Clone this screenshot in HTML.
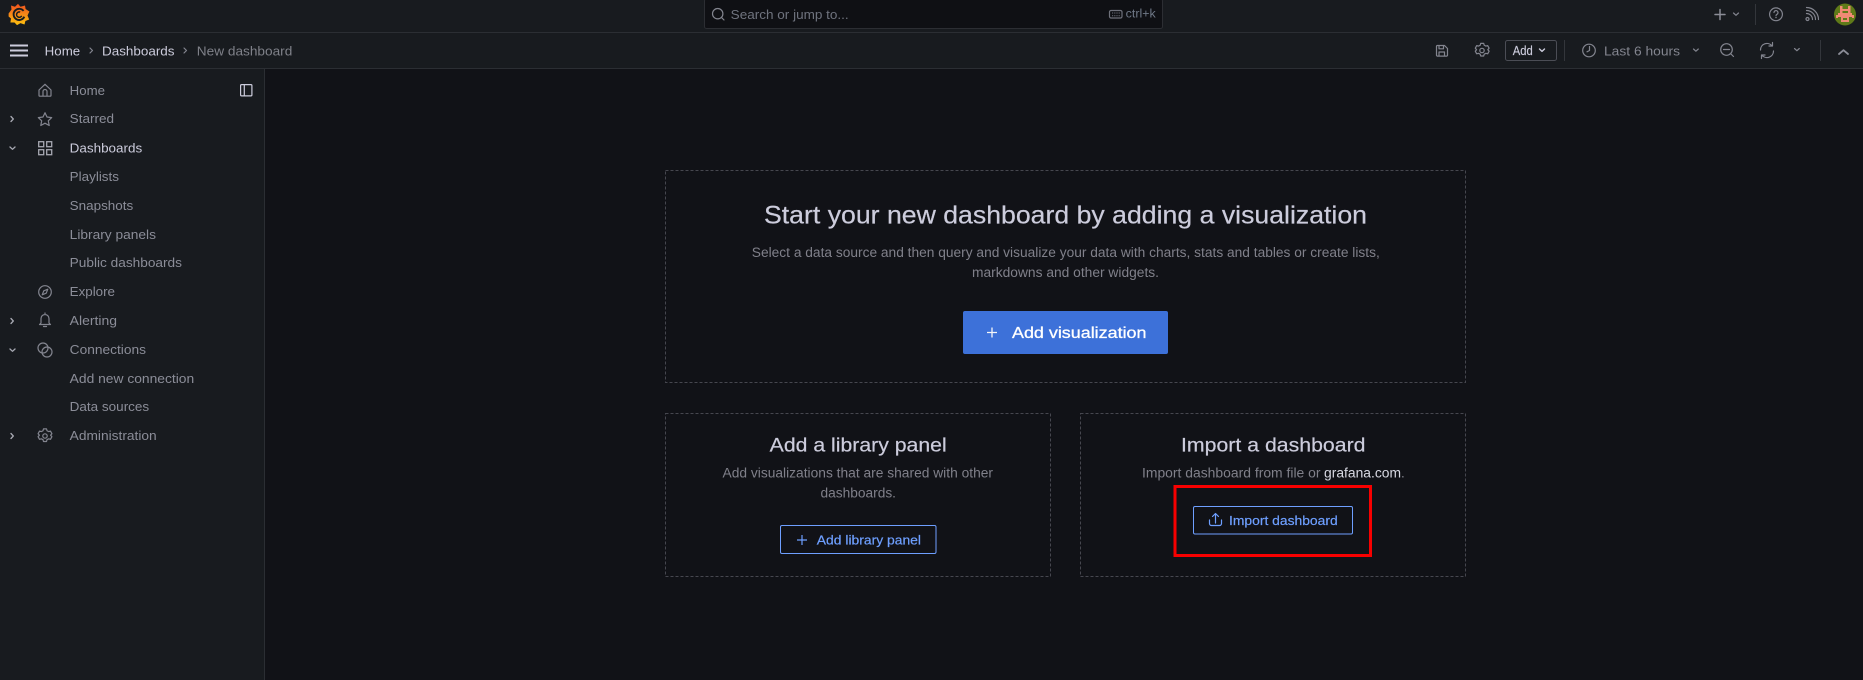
<!DOCTYPE html>
<html lang="en">
<head>
<meta charset="utf-8">
<title>New dashboard - Grafana</title>
<style>
html,body{margin:0;padding:0;background:#111217;width:1863px;height:680px;overflow:hidden}
svg{display:block}
text{font-family:"Liberation Sans",sans-serif;white-space:pre}
.nav{font-size:13.2px;fill:#8b8d98}
.bc{font-size:13.2px;fill:#ccccdc}
.d{font-size:13.5px;fill:#80808a}
.t{fill:#ccccdc;stroke:#ccccdc;stroke-width:.2px}
.b{font-size:13px;fill:#6e9fff;stroke:#6e9fff;stroke-width:.2px}
.i{fill:none;stroke:#83858f;stroke-width:1.2;stroke-linecap:round;stroke-linejoin:round}
</style>
</head>
<body>
<svg width="1863" height="680" viewBox="0 0 1863 680" xmlns="http://www.w3.org/2000/svg">
<defs>
<linearGradient id="g" x1="0" y1="1" x2="0" y2="0"><stop offset="0" stop-color="#fcc20f"/><stop offset="1" stop-color="#f0501f"/></linearGradient>
</defs>
<rect width="1863" height="680" fill="#111217"/>
<!-- header rows -->
<rect width="1863" height="68" fill="#181b1f"/>
<rect y="32" width="1863" height="1" fill="#2b2e33"/>
<rect y="68" width="1863" height="1" fill="#2b2e33"/>
<!-- sidebar -->
<rect y="69" width="264" height="611" fill="#181b1f"/>
<rect x="264" y="69" width="1" height="611" fill="#2b2e33"/>

<!-- logo -->
<g transform="translate(19 14.5)">
<g fill="url(#g)">
<polygon points="-10.4,-1 -7.5,-5 -8,-9 -4,-7.8 -1,-10.6 1.5,-7.8 6,-9 6.6,-5.5 10.4,-3 8.5,1 10.2,5 6.4,6.5 5.5,10 1.5,8.6 -2,10.6 -4.5,8 -8.6,8 -8,4 -10.4,2"/>
</g>
<path d="M5.3 2.2A5.6 5.6 0 1 1 4.6-3.6" fill="none" stroke="#181b1f" stroke-width="1.9"/>
<path d="M2.7 1.3A2.7 2.7 0 1 1 1.2-2.4" fill="none" stroke="#181b1f" stroke-width="1.5"/>
</g>

<!-- search -->
<rect x="704.5" y="-1" width="458" height="29.5" rx="2" fill="#0f1014" stroke="#2c2e33"/>
<circle cx="717.7" cy="13.7" r="5.2" fill="none" stroke="#83858f" stroke-width="1.2"/>
<path d="M721.5 17.5l2.5 2.5" class="i"/>
<text x="730.7" y="19" font-size="13.2" fill="#6f737e" textLength="118" lengthAdjust="spacingAndGlyphs">Search or jump to...</text>
<rect x="1109.5" y="10.5" width="12.5" height="7.5" rx="1.5" fill="none" stroke="#6f717b" stroke-width="1.2"/>
<path d="M1112 13h8M1112 15.7h8" stroke="#6f717b" stroke-width="1" stroke-dasharray="1 .8"/>
<text x="1125.7" y="17.5" font-size="11.5" fill="#6f7887" textLength="30" lengthAdjust="spacingAndGlyphs">ctrl+k</text>

<!-- top right -->
<path d="M1720 9.5v10M1715 14.5h10" stroke="#8b8d97" stroke-width="1.5" stroke-linecap="round"/>
<path d="M1733.5 13l2.5 2.3 2.5-2.3" class="i"/>
<rect x="1755" y="4" width="1" height="21" fill="#33363b"/>
<circle cx="1776" cy="14.3" r="6.4" class="i"/>
<path d="M1774 12.5a2 2 0 1 1 3 1.8c-.7.4-1 .8-1 1.4" class="i" stroke-width="1.1"/>
<circle cx="1776" cy="17.6" r=".7" fill="#83858f"/>
<circle cx="1807.5" cy="19" r="1.5" class="i"/>
<path d="M1806.5 14a6 6 0 0 1 6 6M1806.5 11a9 9 0 0 1 9 9M1806.5 8a12 12 0 0 1 12 12" class="i" stroke-width="1.1" transform="translate(0 -.5)"/>
<!-- avatar -->
<circle cx="1845" cy="14.5" r="11" fill="#5f7a18"/>
<g fill="#f08a75">
<rect x="1840" y="6" width="2.5" height="7"/><rect x="1848" y="6" width="2.5" height="7"/>
<rect x="1842" y="9" width="6" height="2"/>
<rect x="1838" y="13" width="14" height="4"/>
<rect x="1841" y="17" width="8" height="5"/>
<rect x="1836" y="15" width="2" height="3"/><rect x="1852" y="15" width="2" height="3"/>
</g>
<rect x="1843" y="18" width="4" height="2" fill="#5f7a18"/>

<!-- breadcrumb row -->
<path d="M10 45.5h18M10 50.5h18M10 55.5h18" stroke="#ccccdc" stroke-width="1.9"/>
<text class="bc" x="44.7" y="55.3" textLength="35.5" lengthAdjust="spacingAndGlyphs">Home</text>
<path d="M90 48l2.5 2.5-2.5 2.5" class="i"/>
<text class="bc" x="102" y="55.3" textLength="72.5" lengthAdjust="spacingAndGlyphs">Dashboards</text>
<path d="M184 48l2.5 2.5-2.5 2.5" class="i"/>
<text class="bc" x="196.8" y="55.3" textLength="95.5" lengthAdjust="spacingAndGlyphs" style="fill:#7f8189">New dashboard</text>

<!-- toolbar right -->
<path d="M1437 45.5h7.5l3 3v6.8a.8.8 0 0 1-.8.8h-9.4a.8.8 0 0 1-.8-.8v-9a.8.8 0 0 1 .5-.8zM1439 45.5v3.3h4.5v-3.3M1439 56v-4h5.5v4" class="i"/>
<circle cx="1482" cy="50.5" r="2.2" class="i"/>
<path d="M1480.5 44.2h3l.5 1.8 1.7.9 1.8-.5 1.4 2.6-1.3 1.5 1.3 1.5-1.4 2.6-1.8-.5-1.7.9-.5 1.8h-3l-.5-1.8-1.7-.9-1.8.5-1.4-2.6 1.3-1.5-1.3-1.5 1.4-2.6 1.8.5 1.7-.9z" class="i" transform="translate(.2 -.8)"/>
<rect x="1505.5" y="40.5" width="51" height="20" rx="2" fill="none" stroke="#4b4d55"/>
<text x="1512.8" y="54.8" font-size="12.5" fill="#ccccdc" stroke="#ccccdc" stroke-width=".15" textLength="20" lengthAdjust="spacingAndGlyphs">Add</text>
<path d="M1539.5 49l2.5 2.4 2.5-2.4" fill="none" stroke="#ccccdc" stroke-width="1.4" stroke-linecap="round" stroke-linejoin="round"/>
<rect x="1564" y="40" width="1" height="21" fill="#33363b"/>
<circle cx="1589" cy="50.5" r="6.3" class="i"/>
<path d="M1589.5 46.5v4l-2.5 1.3" class="i"/>
<text x="1604" y="55.5" font-size="13.2" fill="#83858f" textLength="76" lengthAdjust="spacingAndGlyphs">Last 6 hours</text>
<path d="M1693.5 49l2.4 2.2 2.4-2.2" class="i"/>
<circle cx="1726.5" cy="49.5" r="5.8" class="i"/>
<path d="M1723.5 49.5h6M1731 54l2.5 2.5" class="i"/>
<path d="M1760.5 50a6.5 6.5 0 0 1 11.5-4.2M1773.5 51a6.5 6.5 0 0 1-11.5 4.2M1772.5 42.5v3.5h-3.5M1761.5 58.5v-3.5h3.5" class="i"/>
<path d="M1794.5 48.5l2.4 2.2 2.4-2.2" class="i"/>
<rect x="1820" y="40" width="1" height="21" fill="#33363b"/>
<path d="M1839 54l4.5-3.8 4.5 3.8" fill="none" stroke="#8b8d97" stroke-width="1.8" stroke-linecap="round" stroke-linejoin="round"/>

<!-- sidebar items -->
<text class="nav" x="69.7" y="95.2" textLength="35.3" lengthAdjust="spacingAndGlyphs">Home</text>
<text class="nav" x="69.7" y="123.2" textLength="44.3" lengthAdjust="spacingAndGlyphs">Starred</text>
<text class="nav" x="69.7" y="152.4" textLength="72.5" lengthAdjust="spacingAndGlyphs" style="fill:#ccccdc">Dashboards</text>
<text class="nav" x="69.7" y="181.2" textLength="49.3" lengthAdjust="spacingAndGlyphs">Playlists</text>
<text class="nav" x="69.7" y="210" textLength="63.5" lengthAdjust="spacingAndGlyphs">Snapshots</text>
<text class="nav" x="69.7" y="238.8" textLength="86.3" lengthAdjust="spacingAndGlyphs">Library panels</text>
<text class="nav" x="69.7" y="266.8" textLength="112.3" lengthAdjust="spacingAndGlyphs">Public dashboards</text>
<text class="nav" x="69.7" y="296.2" textLength="45.3" lengthAdjust="spacingAndGlyphs">Explore</text>
<text class="nav" x="69.7" y="325" textLength="47.3" lengthAdjust="spacingAndGlyphs">Alerting</text>
<text class="nav" x="69.7" y="354" textLength="76.3" lengthAdjust="spacingAndGlyphs">Connections</text>
<text class="nav" x="69.7" y="383" textLength="124.5" lengthAdjust="spacingAndGlyphs">Add new connection</text>
<text class="nav" x="69.7" y="411.2" textLength="79.5" lengthAdjust="spacingAndGlyphs">Data sources</text>
<text class="nav" x="69.7" y="440" textLength="87" lengthAdjust="spacingAndGlyphs">Administration</text>

<!-- sidebar chevrons -->
<path d="M11 116.5l2.3 2.5-2.3 2.5M11 318.5l2.3 2.5-2.3 2.5M11 433.5l2.3 2.5-2.3 2.5" fill="none" stroke="#a6a8b1" stroke-width="1.3" stroke-linecap="round" stroke-linejoin="round"/>
<path d="M10 147l2.5 2.3 2.5-2.3M10 349l2.5 2.3 2.5-2.3" fill="none" stroke="#a6a8b1" stroke-width="1.3" stroke-linecap="round" stroke-linejoin="round"/>

<!-- sidebar icons -->
<path d="M39 90l6-5.7 6 5.7v5.2a1 1 0 0 1-1 1h-10a1 1 0 0 1-1-1zM43 96v-4.5a2 2 0 0 1 4 0V96" class="i"/>
<path d="M45 112.7l2 4.3 4.7.6-3.4 3.2.9 4.7-4.2-2.3-4.2 2.3.9-4.7-3.4-3.2 4.7-.6z" class="i"/>
<g fill="none" stroke="#a6a8b1" stroke-width="1.3"><rect x="38.7" y="141.7" width="5" height="5"/><rect x="46.7" y="141.7" width="5" height="5"/><rect x="38.7" y="149.7" width="5" height="5"/><rect x="46.7" y="149.7" width="5" height="5"/></g>
<circle cx="45" cy="292" r="6.3" class="i"/>
<path d="M47.8 289.2l-1.6 4-4 1.6 1.6-4z" class="i"/>
<path d="M41 323v-4.5a4 4 0 0 1 8 0v4.5l1.5 1.5h-11zM43.5 326.5h3M45 313v1.3" class="i"/>
<circle cx="43" cy="348" r="5" class="i"/>
<circle cx="47" cy="352" r="5" class="i"/>
<circle cx="45" cy="436" r="2.2" class="i"/>
<path d="M43.5 429.7h3l.5 1.8 1.7.9 1.8-.5 1.4 2.6-1.3 1.5 1.3 1.5-1.4 2.6-1.8-.5-1.7.9-.5 1.8h-3l-.5-1.8-1.7-.9-1.8.5-1.4-2.6 1.3-1.5-1.3-1.5 1.4-2.6 1.8.5 1.7-.9z" class="i" transform="translate(0 -.8)"/>
<rect x="240.6" y="84.6" width="11.3" height="11.3" rx="1" fill="none" stroke="#ccccdc" stroke-width="1.2"/>
<path d="M244.3 85v10.5" stroke="#ccccdc" stroke-width="1.2"/>

<!-- main panel -->
<rect x="665.5" y="170.5" width="800" height="212" fill="none" stroke="#46474f" stroke-dasharray="3 2"/>
<text class="t" x="764" y="223.3" font-size="25" textLength="603" lengthAdjust="spacingAndGlyphs">Start your new dashboard by adding a visualization</text>
<text class="d" x="751.8" y="257" textLength="628" lengthAdjust="spacingAndGlyphs">Select a data source and then query and visualize your data with charts, stats and tables or create lists,</text>
<text class="d" x="972" y="277" textLength="187" lengthAdjust="spacingAndGlyphs">markdowns and other widgets.</text>
<rect x="963" y="311" width="205" height="43" rx="2" fill="#3d71d9"/>
<path d="M992 327.5v10M987 332.5h10" stroke="#f4f5f8" stroke-width="1.3"/>
<text x="1012" y="338" font-size="16" fill="#fff" stroke="#fff" stroke-width=".3" textLength="134.5" lengthAdjust="spacingAndGlyphs">Add visualization</text>

<!-- library panel -->
<rect x="665.5" y="413.5" width="385" height="163" fill="none" stroke="#46474f" stroke-dasharray="3 2"/>
<text class="t" x="769.7" y="451.7" font-size="19.5" textLength="177" lengthAdjust="spacingAndGlyphs">Add a library panel</text>
<text class="d" x="722.5" y="477.5" textLength="270.5" lengthAdjust="spacingAndGlyphs">Add visualizations that are shared with other</text>
<text class="d" x="820.5" y="497.5" textLength="75.5" lengthAdjust="spacingAndGlyphs">dashboards.</text>
<rect x="780.5" y="525.5" width="155.5" height="28" rx="1.5" fill="none" stroke="#6e9fff"/>
<path d="M802 535v10M797 540h10" stroke="#6e9fff" stroke-width="1.2"/>
<text class="b" x="816.8" y="544.3" textLength="104.2" lengthAdjust="spacingAndGlyphs">Add library panel</text>

<!-- import panel -->
<rect x="1080.5" y="413.5" width="385" height="163" fill="none" stroke="#46474f" stroke-dasharray="3 2"/>
<text class="t" x="1181" y="451.7" font-size="19.5" textLength="184.5" lengthAdjust="spacingAndGlyphs">Import a dashboard</text>
<text class="d" x="1142" y="477.5" textLength="178.5" lengthAdjust="spacingAndGlyphs">Import dashboard from file or</text>
<text x="1324" y="477.5" font-size="13.5" fill="#d8d9e3" textLength="77" lengthAdjust="spacingAndGlyphs">grafana.com</text>
<text class="d" x="1401" y="477.5">.</text>
<rect x="1175" y="486.5" width="195.5" height="69" fill="none" stroke="#f80000" stroke-width="3"/>
<rect x="1193.5" y="506.5" width="159" height="27.5" rx="1.5" fill="none" stroke="#6e9fff"/>
<path d="M1215.5 523v-9M1212.5 516.5l3-3 3 3M1209.5 520v3.5a2 2 0 0 0 2 2h8a2 2 0 0 0 2-2V520" fill="none" stroke="#6e9fff" stroke-width="1.2" stroke-linecap="round" stroke-linejoin="round"/>
<text class="b" x="1229" y="525" textLength="108.7" lengthAdjust="spacingAndGlyphs">Import dashboard</text>
</svg>
</body>
</html>
